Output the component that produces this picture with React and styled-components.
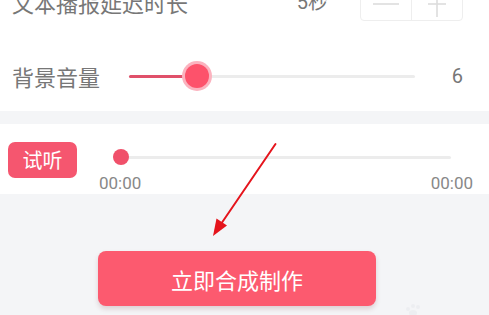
import React from "react";
import styled, { createGlobalStyle } from "styled-components";

const Global = createGlobalStyle`
  html, body { margin: 0; padding: 0; }
  body {
    background: #f4f5f7;
    font-family: Roboto, "Noto Sans CJK SC", sans-serif;
    overflow: hidden;
  }
`;

const Page = styled.div`
  position: relative;
  width: 489px;
  height: 315px;
  overflow: hidden;
  background: #f4f5f7;
`;

const Card = styled.section`
  background: #fff;
  display: flex;
  flex-direction: ${(p) => p.$dir || "column"};
  padding: ${(p) => p.$pad};
  margin-top: ${(p) => p.$mt || 0}px;
  height: ${(p) => (p.$h ? `${p.$h}px` : "auto")};
  box-sizing: border-box;
`;

const Row = styled.div`
  display: flex;
  align-items: center;
  height: ${(p) => p.$h}px;
  margin-top: ${(p) => p.$mt || 0}px;
`;

const Label = styled.span`
  font-family: "Noto Sans CJK SC", sans-serif;
  font-size: 22px;
  line-height: 26px;
  color: #777;
  width: ${(p) => (p.$w ? `${p.$w}px` : "auto")};
  flex: none;
`;

const Value = styled.span`
  font-family: Roboto, "Noto Sans CJK SC", sans-serif;
  font-size: 20px;
  line-height: 24px;
  color: #777;
  margin-left: auto;
`;

const Stepper = styled.div`
  display: flex;
  margin-left: 32px;
  border: 1px solid #eee;
  border-radius: 4px;
  height: 32px;
  margin-top: 4px;
`;

const StepBtn = styled.div`
  width: 50px;
  display: flex;
  align-items: center;
  justify-content: center;
  & + & {
    border-left: 1px solid #eee;
  }
`;

const Slider = styled.div`
  position: relative;
  width: 286px;
  height: 30px;
  display: flex;
  align-items: center;
`;

const Track = styled.div`
  position: relative;
  flex: 1;
  height: ${(p) => p.$h}px;
  background: #ececec;
  border-radius: 2px;
`;

const Fill = styled.div`
  position: absolute;
  left: 0;
  top: 0;
  bottom: 0;
  background: #e0506a;
  border-radius: 2px;
`;

const Thumb = styled.div`
  position: absolute;
  top: 50%;
  width: ${(p) => p.$size}px;
  height: ${(p) => p.$size}px;
  transform: translate(-50%, -50%);
  border-radius: 50%;
  background: ${(p) => p.$color};
  box-shadow: ${(p) => (p.$ring ? `0 0 0 3px ${p.$ring}` : "none")};
`;

const ListenBtn = styled.button`
  flex: none;
  width: 69px;
  height: 36px;
  margin-top: 18px;
  border: none;
  border-radius: 7px;
  background: #f5566f;
  color: #fff;
  font-family: "Noto Sans CJK SC", sans-serif;
  font-size: 20px;
  line-height: 36px;
  padding: 0;
`;

const Player = styled.div`
  flex: 1;
  display: flex;
  flex-direction: column;
  margin-left: 22px;
  padding-top: 25px;
`;

const PlayerTrack = styled.div`
  height: 16px;
  display: flex;
  align-items: center;
  padding: 0 22px 0 14px;
`;

const Times = styled.div`
  display: flex;
  justify-content: space-between;
  margin-top: 8px;
  font-family: Roboto, sans-serif;
  font-size: 17px;
  line-height: 20px;
  color: #888;
`;

const Footer = styled.div`
  display: flex;
  padding-left: 98px;
  padding-top: 57px;
`;

const MainBtn = styled.button`
  width: 278px;
  height: 55px;
  border: none;
  border-radius: 8px;
  background: #fc5a6f;
  color: #fff;
  font-family: "Noto Sans CJK SC", sans-serif;
  font-size: 22px;
  box-shadow: 0 3px 5px rgba(120, 40, 50, 0.18);
  padding: 0;
`;

const Overlay = styled.svg`
  position: absolute;
  left: 0;
  top: 0;
  pointer-events: none;
`;

const MinusIcon = () => (
  <svg width="26" height="4" viewBox="0 0 26 4">
    <line x1="0" y1="2" x2="26" y2="2" stroke="#dcdcdc" strokeWidth="1.6" />
  </svg>
);

const PlusIcon = () => (
  <svg width="18" height="26" viewBox="0 0 18 26">
    <line x1="0" y1="13" x2="18" y2="13" stroke="#dcdcdc" strokeWidth="1.6" />
    <line x1="9" y1="0" x2="9" y2="26" stroke="#dcdcdc" strokeWidth="1.6" />
  </svg>
);

export default function App() {
  return (
    <Page>
      <Global />
      <Card $pad="0 26px 9px 12px">
        <Row $h={48} $mt={-22}>
          <Label>文本播报延迟时长</Label>
          <Value>5秒</Value>
          <Stepper>
            <StepBtn><MinusIcon /></StepBtn>
            <StepBtn><PlusIcon /></StepBtn>
          </Stepper>
        </Row>
        <Row $h={52} $mt={24}>
          <Label $w={117}>背景音量</Label>
          <Slider>
            <Track $h={3}>
              <Fill style={{ width: 68 }} />
              <Thumb $size={24} $color="#fd526b" $ring="#fbb3bf" style={{ left: 68 }} />
            </Track>
          </Slider>
          <Value>6</Value>
        </Row>
      </Card>
      <Card $pad="0 16px 0 8px" $mt={13} $dir="row" $h={70}>
        <ListenBtn>试听</ListenBtn>
        <Player>
          <PlayerTrack>
            <Track $h={3}>
              <Thumb $size={16} $color="#f0506a" style={{ left: 7.5 }} />
            </Track>
          </PlayerTrack>
          <Times>
            <span>00:00</span>
            <span>00:00</span>
          </Times>
        </Player>
      </Card>
      <Footer>
        <MainBtn>立即合成制作</MainBtn>
      </Footer>
      <Overlay width="489" height="315" viewBox="0 0 489 315">
        <line x1="275.5" y1="144" x2="221" y2="224" stroke="#e5141c" strokeWidth="2" strokeLinecap="round" />
        <polygon points="213,236 216.5,218.5 227,225.5" fill="#e5141c" />
        <g fill="#eceef1">
          <circle cx="408" cy="309" r="2" />
          <circle cx="413" cy="306" r="2" />
          <circle cx="418" cy="307" r="2" />
          <ellipse cx="413" cy="313" rx="4" ry="3" />
        </g>
      </Overlay>
    </Page>
  );
}
